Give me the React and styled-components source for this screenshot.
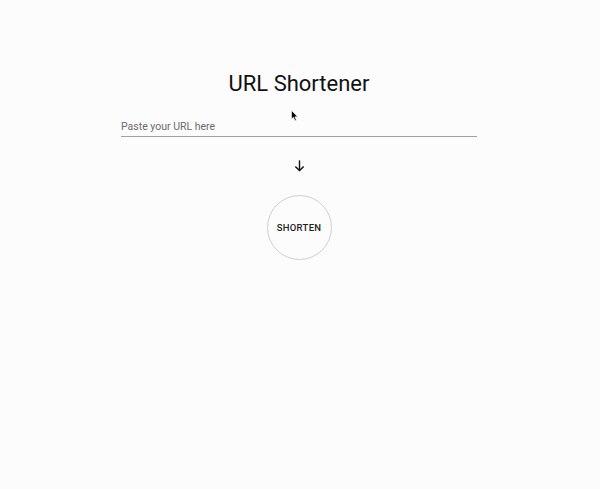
import React from "react";
import styled, { createGlobalStyle } from "styled-components";

const Global = createGlobalStyle`
  html, body { margin: 0; padding: 0; background: #fdfcfd; }
  body { font-family: Roboto, "Noto Sans", sans-serif; color: #111; }
`;

const Page = styled.main`
  position: relative;
  width: 598px;
  height: 489px;
  display: flex;
  flex-direction: column;
  align-items: center;
  padding-top: 70px;
  box-sizing: border-box;
`;

const Title = styled.h1`
  margin: 0;
  font-size: 22px;
  font-weight: 400;
  line-height: 28px;
  color: #111;
`;

const Field = styled.div`
  margin-top: 15px;
  width: 356px;
  border-bottom: 1px solid #a0a0a0;
`;

const Input = styled.input`
  width: 100%;
  box-sizing: border-box;
  border: none;
  background: transparent;
  outline: none;
  font-family: Roboto, sans-serif;
  font-size: 10.5px;
  padding: 7px 0 3px;
  color: #222;
  &::placeholder { color: #6a6a6a; }
`;

const ArrowWrap = styled.div`
  margin-top: 22px;
  height: 13px;
  display: flex;
`;

const ShortenButton = styled.button`
  margin-top: 23px;
  width: 65px;
  height: 65px;
  border-radius: 50%;
  border: 1px solid #cfcfcf;
  background: transparent;
  font-family: Roboto, sans-serif;
  font-size: 9.5px;
  font-weight: 500;
  letter-spacing: 0.3px;
  color: #222;
  padding: 0;
  cursor: pointer;
`;

const Cursor = styled.svg`
  position: absolute;
  left: 291px;
  top: 110px;
`;

export default function App() {
  return (
    <>
      <Global />
      <Page>
        <Title>URL Shortener</Title>
        <Field>
          <Input placeholder="Paste your URL here" />
        </Field>
        <ArrowWrap>
          <svg width="13" height="13" viewBox="0 0 14 14" fill="none" stroke="#111" strokeWidth="1.5">
            <path d="M7 1.5 V12.5" />
            <path d="M2.5 8 L7 12.5 L11.5 8" />
          </svg>
        </ArrowWrap>
        <ShortenButton>SHORTEN</ShortenButton>
        <Cursor width="8" height="12" viewBox="0 0 8 12">
          <path d="M0.5 0.5 L0.5 9 L2.5 7.2 L4 10.8 L5.3 10.2 L3.9 6.8 L6.6 6.8 Z" fill="#000" stroke="#fff" strokeWidth="0.6" />
        </Cursor>
      </Page>
    </>
  );
}
